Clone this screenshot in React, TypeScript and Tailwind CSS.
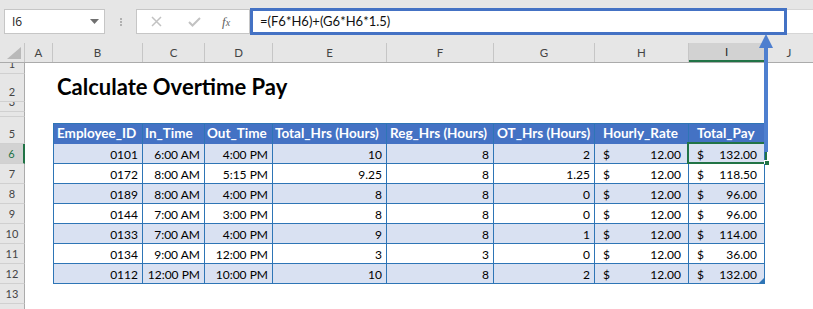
import React from "react";

const COLW = ["w-[90px]", "w-[62px]", "w-[68px]", "w-[114px]", "w-[107px]", "w-[101px]", "w-[94px]", "w-[76px]"];
const COLHW = ["w-[28px]", "w-[90px]", "w-[62px]", "w-[68px]", "w-[114px]", "w-[107px]", "w-[101px]", "w-[94px]", "w-[76px]"];
const LETTERS = ["A", "B", "C", "D", "E", "F", "G", "H", "I"];

const HEADERS = [
  "Employee_ID",
  "In_Time",
  "Out_Time",
  "Total_Hrs (Hours)",
  "Reg_Hrs (Hours)",
  "OT_Hrs (Hours)",
  "Hourly_Rate",
  "Total_Pay",
];
const HPAD = ["pl-[3px]", "pl-[2px]", "pl-[2px]", "pl-[2px]", "pl-[3px]", "pl-[3px]", "pl-[8px]", "pl-[8px]"];

const DATA: string[][] = [
  ["0101", "6:00 AM", "4:00 PM", "10", "8", "2", "12.00", "132.00"],
  ["0172", "8:00 AM", "5:15 PM", "9.25", "8", "1.25", "12.00", "118.50"],
  ["0189", "8:00 AM", "4:00 PM", "8", "8", "0", "12.00", "96.00"],
  ["0144", "7:00 AM", "3:00 PM", "8", "8", "0", "12.00", "96.00"],
  ["0133", "7:00 AM", "4:00 PM", "9", "8", "1", "12.00", "114.00"],
  ["0134", "9:00 AM", "12:00 PM", "3", "3", "0", "12.00", "36.00"],
  ["0112", "12:00 PM", "10:00 PM", "10", "8", "2", "12.00", "132.00"],
];

function RowHeader({ n, h, selected }: { n: number; h: string; selected?: boolean }) {
  return (
    <div
      className={
        "w-[25px] shrink-0 flex items-end justify-center pb-[4px] overflow-hidden border-b border-b-[#d0d0d0] text-[11px] leading-[11px] " +
        h +
        (selected
          ? " bg-[#d2d2d2] border-r-2 border-r-[#217346] text-[#217346]"
          : " bg-[#e6e6e6] border-r border-r-[#ababab] text-[#444444]")
      }
    >
      {n}
    </div>
  );
}

function TopBar() {
  return (
    <div className="h-[43px] bg-[#e6e6e6] flex items-start pt-[8px]">
      <div className="ml-[4px] mt-[1px] w-[101px] h-[25px] bg-white border border-[#c6c6c6] flex items-center justify-between pl-[7px] pr-[5px]">
        <span className="text-[12px] text-[#222] font-['Open_Sans',sans-serif]">I6</span>
        <svg width="9" height="5" viewBox="0 0 9 5">
          <path d="M0 0h9L4.5 5z" fill="#707070" />
        </svg>
      </div>
      <div className="w-[31px] h-[27px] flex flex-col items-center justify-center gap-[1px]">
        <div className="w-[2px] h-[2px] bg-[#b0b0b0]" />
        <div className="w-[2px] h-[2px] bg-[#b0b0b0]" />
        <div className="w-[2px] h-[2px] bg-[#b0b0b0]" />
      </div>
      <div className="mt-[1px] w-[114px] h-[25px] bg-white border border-[#c6c6c6] flex items-center">
        <svg className="ml-[14px]" width="11" height="11" viewBox="0 0 11 11">
          <path d="M1 1L10 10M10 1L1 10" stroke="#c2c2c2" strokeWidth="1.5" />
        </svg>
        <svg className="ml-[26px]" width="13" height="10" viewBox="0 0 13 10">
          <path d="M1 5L4.5 8.5L12 1" stroke="#c2c2c2" strokeWidth="2" fill="none" />
        </svg>
        <span className="ml-[21px] text-[13px] italic text-[#5f5f5f] font-['Liberation_Serif',serif]">
          f<span className="text-[10px]">x</span>
        </span>
      </div>
      <div className="w-[537px] h-[27px] bg-white border-[3px] border-[#4472c4] flex items-center pl-[7px] text-[13px] text-[#111]">
        =(F6*H6)+(G6*H6*1.5)
      </div>
      <div className="flex-1 mt-[1px] h-[25px] bg-white border-y border-[#d6d6d6]" />
    </div>
  );
}

function ColumnHeaders() {
  return (
    <div className="h-[20px] flex border-b border-[#ababab] bg-[#e6e6e6] text-[11.5px] text-[#444444]">
      <div className="w-[25px] shrink-0 relative border-r border-[#c6c6c6]">
        <svg className="absolute left-[7px] top-[4px]" width="14" height="12" viewBox="0 0 14 12">
          <path d="M14 0V12H0Z" fill="#b9b9b9" />
        </svg>
      </div>
      {LETTERS.map((l, i) => (
        <div
          key={l}
          className={
            "shrink-0 flex items-center justify-center border-r border-[#c6c6c6] " +
            COLHW[i] +
            (l === "I" ? " bg-[#d2d2d2] border-b-2 border-b-[#217346] text-[#262626]" : "")
          }
        >
          {l}
        </div>
      ))}
      <div className="flex-1 flex items-center justify-center">J</div>
    </div>
  );
}

function TableHeader() {
  return (
    <div className="flex mt-[6px] h-[21px] text-white font-bold text-[13.5px] leading-[13px]">
      {HEADERS.map((h, i) => (
        <div
          key={h}
          className={
            "shrink-0 flex items-end pb-[4px] whitespace-nowrap bg-[#4472c4] border-t border-r border-[#2e75b6] " +
            COLW[i] +
            " " +
            HPAD[i] +
            (i === 0 ? " border-l" : "")
          }
        >
          {h}
        </div>
      ))}
    </div>
  );
}

function DataRow({ row, idx }: { row: string[]; idx: number }) {
  const band = idx % 2 === 0 ? "bg-[#d9e1f2]" : "bg-white";
  return (
    <div className="flex h-[20px] text-[12px] leading-[12px] text-black">
      {row.map((v, i) => {
        const base =
          "shrink-0 border-r border-b border-[#2e75b6] whitespace-nowrap relative " +
          COLW[i] +
          " " +
          band +
          (i === 0 ? " border-l" : "");
        if (i >= 6) {
          return (
            <div key={i} className={base + " flex items-end justify-between pl-[8px] pr-[7px] pb-[2px]"}>
              <span>$</span>
              <span>{v}</span>
              {i === 7 && idx === 0 && (
                <>
                  <div className="absolute left-[-2px] top-[-2px] w-[80px] h-[22px] border-2 border-[#217346]" />
                  <div className="absolute left-[75px] top-[16px] w-[6px] h-[6px] bg-[#217346] border border-white" />
                </>
              )}
              {i === 7 && idx === 6 && (
                <svg className="absolute right-[0px] bottom-[0px]" width="5" height="5" viewBox="0 0 5 5">
                  <path d="M5 0V5H0Z" fill="#2e75b6" />
                </svg>
              )}
            </div>
          );
        }
        return (
          <div key={i} className={base + " flex items-end justify-end pr-[4px] pb-[2px]"}>
            {v}
          </div>
        );
      })}
    </div>
  );
}

export default function App() {
  return (
    <div className="w-[813px] h-[309px] overflow-hidden relative bg-white font-['Lato',sans-serif]">
      <TopBar />
      <ColumnHeaders />
      {/* row 1 */}
      <div className="flex">
        <RowHeader n={1} h="h-[11px]" />
        <div className="flex-1" />
      </div>
      {/* row 2 */}
      <div className="flex">
        <RowHeader n={2} h="h-[28px]" />
        <div className="flex items-end pl-[32px] pb-[4px]">
          <span className="text-[22px] leading-[22px] font-bold text-black whitespace-nowrap">Calculate Overtime Pay</span>
        </div>
      </div>
      <div className="flex">
        <RowHeader n={3} h="h-[10px]" />
        <div className="flex-1" />
      </div>
      <div className="flex">
        <RowHeader n={4} h="h-[4px]" />
        <div className="flex-1" />
      </div>
      {/* row 5: table header */}
      <div className="flex">
        <RowHeader n={5} h="h-[27px]" />
        <div className="w-[28px] shrink-0" />
        <TableHeader />
      </div>
      {DATA.map((r, idx) => (
        <div key={idx} className="flex">
          <RowHeader n={6 + idx} h="h-[20px]" selected={idx === 0} />
          <div className="w-[28px] shrink-0" />
          <DataRow row={r} idx={idx} />
        </div>
      ))}
      <div className="flex">
        <RowHeader n={13} h="h-[20px]" />
        <div className="flex-1" />
      </div>
      <div className="flex">
        <RowHeader n={14} h="h-[20px]" />
        <div className="flex-1" />
      </div>
      {/* annotation arrow */}
      <svg className="absolute left-[758px] top-[34px]" width="16" height="120" viewBox="0 0 16 120">
        <path d="M8 0L15 14H1Z" fill="#4e7fcf" />
        <rect x="6" y="13" width="4" height="105" fill="#4e7fcf" />
      </svg>
    </div>
  );
}
